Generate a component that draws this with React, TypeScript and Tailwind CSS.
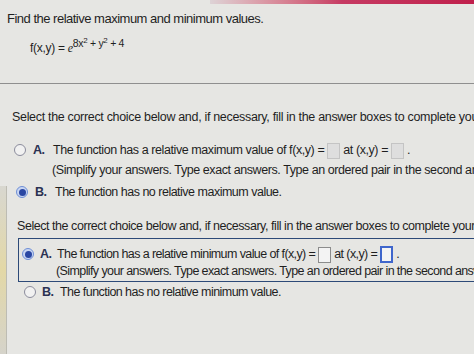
import React from 'react';

type RadioProps = { checked?: boolean };

const Radio: React.FC<RadioProps> = ({ checked }) =>
  checked ? (
    <span className="flex h-[12px] w-[12px] shrink-0 items-center justify-center rounded-full border border-[#6f8fd6] bg-[#c9d6f2]">
      <span className="h-[7px] w-[7px] rounded-full bg-[#2a47a3]" />
    </span>
  ) : (
    <span className="block h-[12px] w-[12px] shrink-0 rounded-full border-[1.5px] border-[#8b8c9c] bg-[#f1f1f1]" />
  );

const AnswerBox: React.FC<{ variant?: 'dim' | 'plain' | 'focus' }> = ({ variant = 'dim' }) => {
  const cls =
    variant === 'focus'
      ? 'h-[17px] w-[13px] border-2 border-[#3f66cc] bg-[#f4f4f4]'
      : variant === 'plain'
        ? 'h-[16px] w-[13px] border border-[#8c8c8c] bg-[#f3f3f3]'
        : 'h-[16px] w-[13px] border border-[#c4c4c4] bg-[#dedede]';
  return <span className={`mx-[3px] inline-block align-middle ${cls}`} />;
};

export default function App() {
  return (
    <div className="relative h-[354px] w-[474px] overflow-hidden bg-[#e6e6e3] text-[#1f1f1f] [font-family:'Liberation_Sans',Arial,sans-serif]">
      {/* top bar */}
      <div className="flex h-[4px]">
        <div className="flex-1" />
        <div className="w-[264px] bg-gradient-to-r from-[#ddd3d6] via-[#c63a63] to-[#c01f4c]" />
      </div>

      {/* bezel shadow on the left */}
      <div className="absolute bottom-0 left-0 top-[186px] w-[7px] border-r border-[#bdbcb3] bg-gradient-to-b from-[#d8d7d0] via-[#e3d8a6] to-[#d5d3ca]" />

      <h1 className="ml-[7px] mt-[7px] text-[13px] leading-[16px] tracking-[-0.5px]">
        Find the relative maximum and minimum values.
      </h1>

      <div className="ml-[30px] mt-[13px] text-[12px] leading-[16px] tracking-[-0.3px]">
        f(x,y) = <span className="[font-family:'Liberation_Serif',serif] italic">e</span>
        <sup className="text-[10.5px]">
          8x<sup className="text-[8px]">2</sup> + y<sup className="text-[8px]">2</sup> + 4
        </sup>
      </div>

      <div className="mt-[27px] h-px bg-[#8f8f8f]" />

      {/* relative maximum */}
      <p className="ml-[12px] mt-[25px] whitespace-nowrap text-[12.5px] leading-[16px] tracking-[-0.32px]">
        Select the correct choice below and, if necessary, fill in the answer boxes to complete your choice.
      </p>

      <div className="mt-[15px] flex whitespace-nowrap text-[12.5px] leading-[20px] tracking-[-0.42px]">
        <div className="ml-[14px] mt-[4px] shrink-0">
          <Radio />
        </div>
        <span className="ml-[7px] w-[20px] shrink-0 font-bold text-[#2b3152]">A.</span>
        <div className="shrink-0">
          <div>
            The function has a relative maximum value of f(x,y) =<AnswerBox />at (x,y) =<AnswerBox />.
          </div>
          <div className="-ml-px">
            (Simplify your answers. Type exact answers. Type an ordered pair in the second answer box.)
          </div>
        </div>
      </div>

      <div className="mt-[2px] flex whitespace-nowrap text-[12.5px] leading-[20px] tracking-[-0.5px]">
        <div className="ml-[16px] mt-[4px] shrink-0">
          <Radio checked />
        </div>
        <span className="ml-[7px] w-[20px] shrink-0 font-bold text-[#2b3152]">B.</span>
        <div className="shrink-0">The function has no relative maximum value.</div>
      </div>

      {/* relative minimum */}
      <p className="ml-[17px] mt-[16px] whitespace-nowrap text-[12.5px] leading-[16px] tracking-[-0.45px]">
        Select the correct choice below and, if necessary, fill in the answer boxes to complete your choice.
      </p>

      <div className="-mr-[20px] ml-[18px] mt-[4px] flex whitespace-nowrap border-[1.5px] border-[#2d4a78] pb-[1px] pt-[7px] text-[12.5px] leading-[17px] tracking-[-0.6px]">
        <div className="ml-[3px] mt-[2px] shrink-0">
          <Radio checked />
        </div>
        <span className="ml-[6px] w-[17px] shrink-0 font-bold text-[#2b3152]">A.</span>
        <div className="shrink-0">
          <div>
            The function has a relative minimum value of f(x,y) =<AnswerBox variant="plain" />at (x,y) =
            <AnswerBox variant="focus" />.
          </div>
          <div className="-ml-px">
            (Simplify your answers. Type exact answers. Type an ordered pair in the second answer box.)
          </div>
        </div>
      </div>

      <div className="mt-[1px] flex whitespace-nowrap text-[12.5px] leading-[18px] tracking-[-0.55px]">
        <div className="ml-[24px] mt-[3px] shrink-0">
          <Radio />
        </div>
        <span className="ml-[6px] w-[18px] shrink-0 font-bold text-[#2b3152]">B.</span>
        <div className="shrink-0">The function has no relative minimum value.</div>
      </div>
    </div>
  );
}
